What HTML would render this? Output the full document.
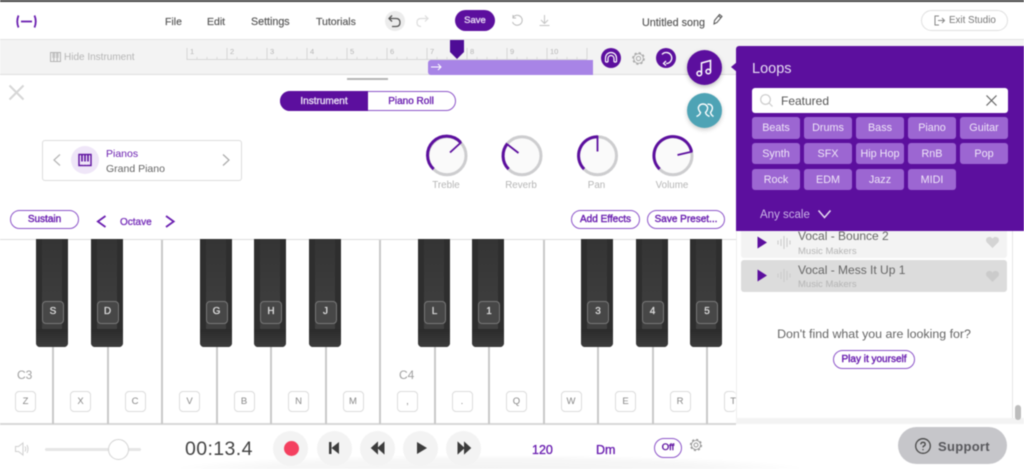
<!DOCTYPE html>
<html><head><meta charset="utf-8">
<style>
html,body{margin:0;padding:0;background:#fff}
#r{position:relative;width:1024px;height:469px;overflow:hidden;background:#fff;font-family:"Liberation Sans",sans-serif;color:#555;filter:blur(.45px)}
#r div,#r span.a{position:absolute;box-sizing:border-box}
.t{position:absolute;white-space:nowrap;line-height:1}
.c{text-align:center;transform:translateX(-50%)}
.m{font-weight:normal;-webkit-text-stroke:.35px currentColor}
.pill{border:1px solid #8d55c9;border-radius:11px;background:#fff;color:#6a1fb0;font-size:10px;-webkit-text-stroke:.4px currentColor;text-align:center;line-height:18.500px;height:19px;top:210px}
.chip{width:48px;height:21.5px;background:#9c66d2;border-radius:3px;color:#efe6f8;font-size:10.8px;text-align:center;line-height:22.5px}
.bk{width:32px;height:108px;top:239px;border-radius:0 0 4px 4px;background:linear-gradient(#343434,#414141) 6px 0/20px 90px no-repeat,#2e2e2e}
.bk i{position:absolute;left:0;right:0;bottom:0;height:18px;border-radius:0 0 4px 4px;background:linear-gradient(#2a2a2a,#3c3c3c)}
.bk b{position:absolute;left:6px;top:62px;width:20px;height:21px;border:1px solid #777;border-radius:4px;background:#474747;color:#ddd;font:normal 10px/19px "Liberation Sans",sans-serif;-webkit-text-stroke:.3px currentColor;text-align:center}
.wl{width:1.5px;top:347px;height:77px;background:#c9c9c9}
.wk{width:21px;height:21px;top:391px;border:1px solid #dcdcdc;border-radius:4px;background:#fff;color:#888;font-size:9.5px;line-height:19px;text-align:center}
.tb{width:35px;height:35px;top:431px;border-radius:50%;background:#f3f3f3}
</style></head>
<body><div id="r">
<div style="left:0;top:0;width:1024px;height:2px;background:#444"></div>
<div style="left:0;top:39px;width:1024px;height:1px;background:#e2e2e2"></div>
<div style="left:0;top:40px;width:1024px;height:35px;background:#f3f3f3;border-bottom:1px solid #dedede"></div>

<svg style="position:absolute;left:14px;top:13px" width="26" height="17" viewBox="0 0 26 17"><path d="M4.500 2.500Q2 8.500 4.500 14.500M20.500 2.500Q23 8.500 20.500 14.500" fill="none" stroke="#6a1fb0" stroke-width="1.800"/><path d="M7 8.500H18" stroke="#6a1fb0" stroke-width="1.800"/></svg>

<span class="t" style="left:165px;top:16.500px;font-size:10.500px;color:#555;-webkit-text-stroke:.15px #555">File</span>
<span class="t" style="left:207px;top:16.500px;font-size:10.500px;color:#555;-webkit-text-stroke:.15px #555">Edit</span>
<span class="t" style="left:251px;top:16.500px;font-size:10.700px;color:#555;-webkit-text-stroke:.15px #555">Settings</span>
<span class="t" style="left:316px;top:16.500px;font-size:10.500px;color:#555;-webkit-text-stroke:.15px #555">Tutorials</span>
<div style="left:385px;top:11px;width:20px;height:20px;border-radius:50%;background:#ececec"></div>
<svg style="position:absolute;left:386px;top:12px" width="18" height="18" viewBox="0 0 18 18"><path d="M6 3.500 3 6.500 6 9.500M3 6.500H10Q14 6.500 14 10.500T10 14.500H6" fill="none" stroke="#555" stroke-width="1.300"/></svg>
<svg style="position:absolute;left:413px;top:12px" width="18" height="18" viewBox="0 0 18 18"><path d="M12 3.500 15 6.500 12 9.500M15 6.500H8Q4 6.500 4 10.500T8 14.500" fill="none" stroke="#ddd" stroke-width="1.200"/></svg>
<div class="m" style="left:455px;top:10px;width:40px;height:21px;border-radius:11px;background:#5c0f9e;color:#e6d9f4;font-size:9.500px;text-align:center;line-height:21px">Save</div>
<svg style="position:absolute;left:510px;top:13px" width="14" height="15" viewBox="0 0 14 15"><path d="M3 4.500A5 5 0 1 1 2.500 9M3 2V5H6" fill="none" stroke="#bbb" stroke-width="1"/></svg>
<svg style="position:absolute;left:537px;top:13px" width="15" height="15" viewBox="0 0 15 15"><path d="M7.500 2V10M4 7 7.500 10.500 11 7M2.500 12.500H12.500" fill="none" stroke="#c4c4c4" stroke-width="1"/></svg>
<span class="t" style="left:642px;top:17.500px;font-size:10.800px;color:#555;-webkit-text-stroke:.15px #555">Untitled song</span>
<svg style="position:absolute;left:711px;top:12px" width="13" height="14" viewBox="0 0 13 14"><path d="M3 12 3.500 8.500 8.500 2.500 11 4.500 6 10.500ZM7.500 3.800 10 5.800" fill="none" stroke="#555" stroke-width="1"/></svg>
<div style="left:921px;top:10px;width:87px;height:21px;border:1px solid #e0e0e0;border-radius:11px;background:#fff"></div>
<svg style="position:absolute;left:933px;top:14px" width="13" height="13" viewBox="0 0 13 13"><path d="M6 2H2V11H6M5 6.500H11.500M9 4 11.500 6.500 9 9" fill="none" stroke="#888" stroke-width="1"/></svg>
<span class="t" style="left:949px;top:16px;font-size:9.800px;color:#777">Exit Studio</span>

<svg style="position:absolute;left:50px;top:52px" width="11" height="10" viewBox="0 0 11 10"><path d="M.5.500H10.500V9.500H.5ZM3.800.5V9.500M7.200.5V9.500" fill="none" stroke="#b5b5b5"/><path d="M2 1H5.500V6H2Z M6 1H9V6H6Z" fill="#b5b5b5" opacity=".5"/></svg>
<span class="t" style="left:64px;top:53px;font-size:10px;color:#b5b5b5">Hide Instrument</span>

<svg style="position:absolute;left:185px;top:44px" width="412" height="18" viewBox="0 0 412 18" font-family="Liberation Sans" font-size="7.500" fill="#b5b5b5">
<path d="M2 4V15.500H402M42 4V15.500M82 4V15.500M122 4V15.500M162 4V15.500M202 4V15.500M242 4V15.500M282 4V15.500M322 4V15.500M362 4V15.500M402 4V15.500" fill="none" stroke="#cfcfcf" stroke-width=".8"/>
<path d="M12 13V15M22 13V15M32 13V15M52 13V15M62 13V15M72 13V15M92 13V15M102 13V15M112 13V15M132 13V15M142 13V15M152 13V15M172 13V15M182 13V15M192 13V15M212 13V15M222 13V15M232 13V15M252 13V15M262 13V15M272 13V15M292 13V15M302 13V15M312 13V15M332 13V15M342 13V15M352 13V15M372 13V15M382 13V15M392 13V15" stroke="#d4d4d4" stroke-width=".8"/>
<text x="5" y="10">1</text><text x="45" y="10">2</text><text x="85" y="10">3</text><text x="125" y="10">4</text><text x="165" y="10">5</text><text x="205" y="10">6</text><text x="245" y="10">7</text><text x="285" y="10">8</text><text x="325" y="10">9</text><text x="365" y="10">10</text>
</svg>
<div style="left:428px;top:60px;width:165px;height:14.500px;background:#a884e6;border-radius:3px 0 0 3px"></div>
<svg style="position:absolute;left:430px;top:61px" width="14" height="12" viewBox="0 0 14 12"><path d="M1 6H11M8 3 11 6 8 9" fill="none" stroke="#fff" stroke-width="1"/></svg>
<svg style="position:absolute;left:450px;top:40px" width="14" height="19" viewBox="0 0 14 19"><path d="M0 0H14V12L7 19 0 12Z" fill="#4e0c96"/></svg>

<div style="left:601px;top:48px;width:20px;height:20px;border-radius:50%;background:#5c0f9e"></div>
<svg style="position:absolute;left:601px;top:48px" width="20" height="20" viewBox="0 0 20 20"><path d="M4.500 14V10A5.500 5.500 0 0 1 15.500 10V14M7 14V10.500A3 3 0 0 1 13 10.500V14M4.500 14H7M13 14H15.500" fill="none" stroke="#fff" stroke-width="1.200"/></svg>
<svg style="position:absolute;left:631px;top:51px" width="15" height="15" viewBox="0 0 15 15" fill="none" stroke="#aaa"><circle cx="7.500" cy="7.500" r="5.600" stroke-width="1.500" stroke-dasharray="2.200 2.200"/><circle cx="7.500" cy="7.500" r="4.800" stroke-width=".9"/><circle cx="7.500" cy="7.500" r="2.100" stroke-width="1"/></svg>
<div style="left:656px;top:48px;width:20px;height:20px;border-radius:50%;background:#5c0f9e"></div>
<svg style="position:absolute;left:656px;top:48px" width="20" height="20" viewBox="0 0 20 20"><path d="M6 6.500A5.500 5.500 0 1 1 10 15.500M10 13 7.500 15.500 10 17.500" fill="none" stroke="#fff" stroke-width="1.300"/></svg>

<div style="left:736px;top:75px;width:288px;height:1px;background:#fff"></div>

<span class="a" style="left:347px;top:78px;width:41px;height:2px;background:#b5b5b5"></span>
<svg style="position:absolute;left:8px;top:84px" width="17" height="17" viewBox="0 0 17 17"><path d="M1.500 1.500 15.500 15.500M15.500 1.500 1.500 15.500" stroke="#d6d6d6" stroke-width="2"/></svg>

<div style="left:280px;top:91px;width:176px;height:20px;border:1px solid #8d55c9;border-radius:10px;background:#fff;overflow:hidden"></div>
<div class="m" style="left:280px;top:91px;width:88px;height:20px;border-radius:10px 0 0 10px;background:#5c0f9e;color:#e9dff5;font-size:10px;text-align:center;line-height:21px">Instrument</div>
<span class="t c m" style="left:411px;top:96.500px;font-size:10px;color:#6a1fb0">Piano Roll</span>

<div style="left:42px;top:140px;width:200px;height:41px;border:1px solid #dcdcdc;border-radius:3px;background:#fff"></div>
<svg style="position:absolute;left:51px;top:153px" width="12" height="14" viewBox="0 0 12 14"><path d="M9 1.500 3 7 9 12.500" fill="none" stroke="#b5b5b5" stroke-width="1.200"/></svg>
<svg style="position:absolute;left:220px;top:153px" width="12" height="14" viewBox="0 0 12 14"><path d="M3 1.500 9 7 3 12.500" fill="none" stroke="#aaa" stroke-width="1.200"/></svg>
<div style="left:71px;top:146px;width:28px;height:28px;border-radius:50%;background:#efe6f8"></div>
<svg style="position:absolute;left:78px;top:153px" width="14" height="14" viewBox="0 0 14 14"><rect x="1" y="1.500" width="12" height="11" fill="none" stroke="#5c0f9e" stroke-width="1.400"/><path d="M4 2V8.500M7 2V8.500M10 2V8.500" stroke="#5c0f9e" stroke-width="1.600"/><path d="M5.500 7V12M8.500 7V12" stroke="#efe6f8" stroke-width=".7"/></svg>
<span class="t" style="left:106px;top:149px;font-size:10.500px;color:#6a1fb0">Pianos</span>
<span class="t" style="left:106px;top:163.500px;font-size:10.500px;color:#666">Grand Piano</span>

<svg style="position:absolute;left:420px;top:130px" width="280" height="50" viewBox="420 130 280 50" fill="#fafafa" stroke-width="3">
<circle cx="447" cy="155.700" r="19" stroke="#cdcdcf"/><circle cx="522" cy="155.700" r="19" stroke="#cdcdcf"/><circle cx="597.500" cy="155.700" r="19" stroke="#cdcdcf"/><circle cx="673" cy="155.700" r="19" stroke="#cdcdcf"/>
<g stroke="#5c0f9e" fill="none">
<path d="M433.600 169.100A19 19 0 1 1 460.500 142.300"/>
<path d="M508.600 169.100A19 19 0 0 1 507.500 143.500"/>
<path d="M584.100 169.100A19 19 0 0 1 597.500 136.700"/>
<path d="M659.600 169.100A19 19 0 1 1 691.500 151.500"/>
<path d="M450 152.500 461.500 142M518.500 153 507.500 144.500M597.500 151.500V135.500M677.500 155 692.500 151.500" stroke-width="1.800"/>
</g></svg>
<span class="t c" style="left:446px;top:180.500px;font-size:9.800px;color:#b5b5b5">Treble</span>
<span class="t c" style="left:521px;top:180.500px;font-size:9.800px;color:#b5b5b5">Reverb</span>
<span class="t c" style="left:596.500px;top:180.500px;font-size:9.800px;color:#b5b5b5">Pan</span>
<span class="t c" style="left:672px;top:180.500px;font-size:9.800px;color:#b5b5b5">Volume</span>

<div class="pill" style="left:10px;width:69px">Sustain</div>
<svg style="position:absolute;left:96px;top:214px" width="12" height="15" viewBox="0 0 12 15"><path d="M9.500 2 1.800 7.500 9.500 13" fill="none" stroke="#6a1fb0" stroke-width="1.800"/></svg>
<span class="t m" style="left:120px;top:217.500px;font-size:10px;color:#7a35bb">Octave</span>
<svg style="position:absolute;left:164px;top:214px" width="12" height="15" viewBox="0 0 12 15"><path d="M2 2 9.700 7.500 2 13" fill="none" stroke="#6a1fb0" stroke-width="1.800"/></svg>
<div class="pill" style="left:571px;width:69px">Add Effects</div>
<div class="pill" style="left:647px;width:78px">Save Preset...</div>

<!-- piano -->
<div style="left:0;top:239px;width:736px;height:1px;background:#dcdcdc"></div>
<div style="left:0;top:423px;width:736px;height:1.500px;background:#d8d8d8"></div>
<div class="wl" style="left:52px"></div>
<div class="wl" style="left:107px"></div>
<div style="left:161px;top:240px;width:1.500px;height:184px;background:#c9c9c9"></div>
<div class="wl" style="left:216px"></div><div class="wl" style="left:270px"></div><div class="wl" style="left:325px"></div>
<div style="left:379px;top:240px;width:1.500px;height:184px;background:#c9c9c9"></div>
<div class="wl" style="left:434px"></div><div class="wl" style="left:488px"></div>
<div style="left:543px;top:240px;width:1.500px;height:184px;background:#c9c9c9"></div>
<div class="wl" style="left:597px"></div><div class="wl" style="left:652px"></div><div class="wl" style="left:706px"></div>

<div class="bk" style="left:36px"><i></i><b>S</b></div>
<div class="bk" style="left:90.500px"><i></i><b>D</b></div>
<div class="bk" style="left:199.500px"><i></i><b>G</b></div>
<div class="bk" style="left:254px"><i></i><b>H</b></div>
<div class="bk" style="left:308.500px"><i></i><b>J</b></div>
<div class="bk" style="left:417.500px"><i></i><b>L</b></div>
<div class="bk" style="left:472px"><i></i><b>1</b></div>
<div class="bk" style="left:581px"><i></i><b>3</b></div>
<div class="bk" style="left:635.500px"><i></i><b>4</b></div>
<div class="bk" style="left:690px"><i></i><b>5</b></div>

<span class="t" style="left:17px;top:369px;font-size:12px;color:#a0a0a0">C3</span>
<span class="t" style="left:399px;top:369px;font-size:12px;color:#a0a0a0">C4</span>
<div class="wk" style="left:15px">Z</div><div class="wk" style="left:70px">X</div><div class="wk" style="left:124.500px">C</div>
<div class="wk" style="left:179px">V</div><div class="wk" style="left:233.500px">B</div><div class="wk" style="left:288px">N</div><div class="wk" style="left:342.500px">M</div>
<div class="wk" style="left:397px">,</div><div class="wk" style="left:451.500px">.</div><div class="wk" style="left:506px">Q</div>
<div class="wk" style="left:560.500px">W</div><div class="wk" style="left:615px">E</div><div class="wk" style="left:669.500px">R</div><div class="wk" style="left:724px;width:12px;border-right:0;text-align:right;overflow:hidden">T</div>

<!-- right panel -->
<div style="left:736px;top:75px;width:288px;height:343px;background:#fff;border-left:1px solid #eee"></div>
<div style="left:736px;top:418px;width:288px;height:6px;background:#f3f3f3"></div>
<div style="left:1012px;top:231px;width:1px;height:187px;background:#e6e6e6"></div>
<div style="left:1015px;top:405px;width:6px;height:15px;border-radius:3px;background:#bdbdbd"></div>

<div style="left:741px;top:225px;width:266px;height:33px;background:#f3f3f3;border-radius:3px"></div>
<div style="left:741px;top:260px;width:266px;height:32px;background:#dcdcdc;border-radius:3px"></div>
<svg style="position:absolute;left:755px;top:234px" width="14" height="50" viewBox="0 0 14 50" fill="#5c0f9e"><path d="M2.500 2.500 12 8.500 2.500 14.500ZM2.500 35.500 12 41.500 2.500 47.500Z"/></svg>
<svg style="position:absolute;left:776px;top:234px" width="16" height="50" viewBox="0 0 16 50" fill="none" stroke="#c9c9c9" stroke-width="1"><path d="M2 6.500V10.500M5 5V12M8 2V15M11 4V13M14 6.500V10.500M2 39.500V43.500M5 38V45M8 35V48M11 37V46M14 39.500V43.500"/></svg>
<span class="t" style="left:798px;top:230px;font-size:12px;color:#666">Vocal - Bounce 2</span>
<span class="t" style="left:798px;top:246.500px;font-size:9.500px;color:#b5b5b5">Music Makers</span>
<span class="t" style="left:798px;top:263.500px;font-size:12px;color:#666">Vocal - Mess It Up 1</span>
<span class="t" style="left:798px;top:280px;font-size:9.500px;color:#b5b5b5">Music Makers</span>
<svg style="position:absolute;left:985px;top:235px" width="15" height="48" viewBox="0 0 15 48" fill="#d4d4d4"><path d="M7.500 13 1.500 7Q0 3.500 3 2.200 6 1.200 7.500 3.700 9 1.200 12 2.200 15 3.500 13.500 7Z"/><path fill="#cbcbcb" d="M7.500 47 1.500 41Q0 37.500 3 36.200 6 35.200 7.500 37.700 9 35.200 12 36.200 15 37.500 13.500 41Z"/></svg>

<span class="t c" style="left:874px;top:328px;font-size:12.400px;color:#666">Don't find what you are looking for?</span>
<div class="pill" style="left:833px;top:350px;width:82px">Play it yourself</div>

<div style="left:736px;top:46px;width:288px;height:185px;background:#5c0f9e;border-radius:3px 0 0 0"></div>
<svg style="position:absolute;left:729px;top:60px" width="8" height="14" viewBox="0 0 8 14"><path d="M8 2 2 7 8 12Z" fill="#5c0f9e"/></svg>
<span class="t" style="left:752px;top:61.500px;font-size:14.500px;color:#e6dcf2">Loops</span>
<div style="left:752px;top:88px;width:256px;height:25px;background:#fff;border-radius:3px"></div>
<svg style="position:absolute;left:759px;top:93px" width="15" height="15" viewBox="0 0 15 15"><circle cx="6.500" cy="6.500" r="4.800" fill="none" stroke="#ccc" stroke-width="1.200"/><path d="M10 10 13.500 13.500" stroke="#ccc" stroke-width="1.200"/></svg>
<span class="t" style="left:781px;top:94.500px;font-size:12px;color:#555">Featured</span>
<svg style="position:absolute;left:985px;top:94px" width="13" height="13" viewBox="0 0 13 13"><path d="M1.500 1.500 11.500 11.500M11.500 1.500 1.500 11.500" stroke="#666" stroke-width="1.200"/></svg>

<div class="chip" style="left:752px;top:117.300px">Beats</div><div class="chip" style="left:804px;top:117.300px">Drums</div><div class="chip" style="left:856px;top:117.300px">Bass</div><div class="chip" style="left:908px;top:117.300px">Piano</div><div class="chip" style="left:960px;top:117.300px">Guitar</div>
<div class="chip" style="left:752px;top:142.800px">Synth</div><div class="chip" style="left:804px;top:142.800px">SFX</div><div class="chip" style="left:856px;top:142.800px">Hip Hop</div><div class="chip" style="left:908px;top:142.800px">RnB</div><div class="chip" style="left:960px;top:142.800px">Pop</div>
<div class="chip" style="left:752px;top:168.500px">Rock</div><div class="chip" style="left:804px;top:168.500px">EDM</div><div class="chip" style="left:856px;top:168.500px">Jazz</div><div class="chip" style="left:908px;top:168.500px">MIDI</div>
<span class="t" style="left:760px;top:210px;font-size:11.500px;color:#c9b3e6">Any scale</span>
<svg style="position:absolute;left:817px;top:208px" width="15" height="12" viewBox="0 0 15 12"><path d="M1.500 2.500 7.500 9.500 13.500 2.500" fill="none" stroke="#e6dcf2" stroke-width="1.500"/></svg>

<div style="left:687px;top:50px;width:35px;height:35px;border-radius:50%;background:#5c0f9e;box-shadow:0 2px 5px rgba(0,0,0,.25)"></div>
<svg style="position:absolute;left:687px;top:50px" width="35" height="35" viewBox="0 0 35 35" fill="none" stroke="#fff" stroke-width="1.500"><path d="M14.500 23V13L23.500 10.500V21"/><circle cx="12.300" cy="23.500" r="2.300"/><circle cx="21.300" cy="21.500" r="2.300"/></svg>
<div style="left:687px;top:93px;width:35px;height:35px;border-radius:50%;background:#4ea3b5;box-shadow:0 2px 5px rgba(0,0,0,.2)"></div>
<svg style="position:absolute;left:687px;top:93px" width="35" height="35" viewBox="0 0 35 35" fill="none" stroke="#fff" stroke-width="1.400"><path d="M9.500 23.500Q13 22 13.500 19.500Q10.800 16.500 11.500 14Q12.800 11 16 11Q19.200 11 20.500 14Q21.200 16.500 18.500 19.500Q19 22 22.500 23.500"/><path d="M20.500 11.300Q24 10.800 25.300 14Q25.800 16.500 23.500 19.500Q24 22 26.500 23.500"/></svg>

<!-- bottom -->
<div style="left:180px;top:455px;width:620px;height:14px;background:radial-gradient(ellipse at 50% 100%,#f3f3f3 0,#f7f7f7 50%,rgba(255,255,255,0) 72%)"></div>
<svg style="position:absolute;left:14px;top:441px" width="16" height="16" viewBox="0 0 16 16" fill="none" stroke="#d0d0d0" stroke-width="1"><path d="M1.500 5.500H4.500L9 2V14L4.500 10.500H1.500ZM11 5.500Q12.500 8 11 10.500M13 4Q15 8 13 12"/></svg>
<div style="left:45px;top:448px;width:96px;height:3px;background:#e6e6e6;border-radius:2px"></div>
<div style="left:108px;top:439px;width:21px;height:21px;border-radius:50%;background:#fff;border:1px solid #d4d4d4"></div>
<span class="t" style="left:185px;top:439.500px;font-size:19.500px;color:#444;letter-spacing:.4px">00:13.4</span>
<div class="tb" style="left:273px"></div><div class="tb" style="left:316.500px"></div><div class="tb" style="left:360px"></div><div class="tb" style="left:403px"></div><div class="tb" style="left:446px"></div>
<div style="left:283.500px;top:441px;width:15px;height:15px;border-radius:50%;background:#f4405f"></div>
<svg style="position:absolute;left:325px;top:440px" width="150" height="17" viewBox="0 0 150 17" fill="#3c3c3c">
<path d="M4 2H6.500V14H4ZM14 2V14L6.500 8Z"/>
<path d="M52.500 2.500 46.500 8 52.500 13.500ZM59 2.500 53 8 59 13.500Z" stroke="#3c3c3c" stroke-width="1"/>
<path d="M92 2 102 8 92 14Z"/>
<path d="M133 2.500 139 8 133 13.500ZM139.500 2.500 145.500 8 139.500 13.500Z" stroke="#3c3c3c" stroke-width="1"/>
</svg>
<span class="t m" style="left:532px;top:444px;font-size:12.500px;color:#6a1fb0">120</span>
<span class="t m" style="left:596px;top:444px;font-size:12.500px;color:#6a1fb0">Dm</span>
<div class="pill" style="left:654px;top:438px;width:28px;height:20px;line-height:18px;font-size:9.500px;color:#5c0f9e">Off</div>
<svg style="position:absolute;left:689px;top:438px" width="14" height="14" viewBox="0 0 14 14" fill="none" stroke="#999"><circle cx="7" cy="7" r="5.400" stroke-width="1.400" stroke-dasharray="2.100 2.140"/><circle cx="7" cy="7" r="4.600" stroke-width=".9"/><circle cx="7" cy="7" r="2" stroke-width="1"/></svg>
<div style="left:898px;top:427px;width:109px;height:37px;border-radius:19px;background:#c6c6ca"></div>
<svg style="position:absolute;left:914px;top:437px" width="18" height="18" viewBox="0 0 18 18" fill="none" stroke="#4a4a4a" stroke-width="1.300"><circle cx="9" cy="9" r="7.300"/><path d="M6.800 7.300Q7 5.300 9 5.300 11.200 5.300 11.200 7.200 11.200 8.400 9.800 9 9 9.400 9 10.500M9 12V13.200"/></svg>
<span class="t" style="left:938px;top:439.500px;font-size:13px;font-weight:bold;color:#58585c;letter-spacing:.3px">Support</span>
</div></body></html>
